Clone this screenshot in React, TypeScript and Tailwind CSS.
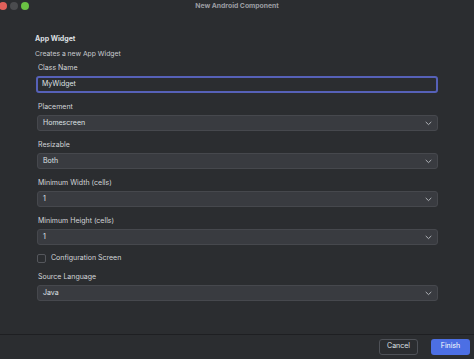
import React from "react";

const font = { fontFamily: "Inter, 'Liberation Sans', sans-serif" };

function Chevron() {
  return (
    <svg width="7" height="5" viewBox="0 0 7 5" className="shrink-0">
      <path d="M1 1.2 L3.5 3.6 L6 1.2" fill="none" stroke="#aeb1b6" strokeWidth="1" strokeLinecap="round" strokeLinejoin="round" />
    </svg>
  );
}

function Label({ children }: { children: React.ReactNode }) {
  return <div className="h-[10px] leading-[10px] text-[7px] text-[#d3d5d9] pl-[3px] mb-[3px]">{children}</div>;
}

function Select({ value }: { value: string }) {
  return (
    <div className="h-[16px] w-[401px] ml-[2px] rounded-[3px] border border-[#46484d] bg-[#393b40] flex items-center justify-between pl-[5px] pr-[5px] text-[7px] text-[#dfe1e5]">
      <span>{value}</span>
      <Chevron />
    </div>
  );
}

export default function App() {
  return (
    <div className="w-[474px] h-[359px] bg-[#2b2d30] flex flex-col overflow-hidden" style={font}>
      <div className="h-[13px] relative flex items-center justify-center">
        <div className="absolute left-[-1px] top-[2px] flex gap-[3px]">
          <span className="w-[8px] h-[8px] rounded-full bg-[#e0605a]" />
          <span className="w-[8px] h-[8px] rounded-full bg-[#4a4b4e]" />
          <span className="w-[8px] h-[8px] rounded-full bg-[#6ac143]" />
        </div>
        <span className="text-[6.8px] font-bold text-[#9c9ea3] leading-none">New Android Component</span>
      </div>
      <div className="flex-1 flex flex-col pl-[35px] pt-[21px]">
        <div className="h-[10px] leading-[10px] text-[7px] font-bold text-[#dfe1e5]">App Widget</div>
        <div className="h-[10px] leading-[10px] text-[6.8px] text-[#c9cbcf] mt-[5px]">Creates a new App Widget</div>
        <div className="mt-[4px]">
          <Label>Class Name</Label>
          <div className="h-[17px] w-[402px] ml-[1px] rounded-[3px] border-[2px] border-[#5661b8] bg-[#2b2d30] flex items-center pl-[4px] text-[7px] text-[#dfe1e5]">
            MyWidget
          </div>
        </div>
        <div className="mt-[9px]">
          <Label>Placement</Label>
          <Select value="Homescreen" />
        </div>
        <div className="mt-[9px]">
          <Label>Resizable</Label>
          <Select value="Both" />
        </div>
        <div className="mt-[9px]">
          <Label>Minimum Width (cells)</Label>
          <Select value="1" />
        </div>
        <div className="mt-[9px]">
          <Label>Minimum Height (cells)</Label>
          <Select value="1" />
        </div>
        <div className="mt-[8px] flex items-center h-[10px] ml-[2px]">
          <span className="w-[9px] h-[9px] rounded-[2px] border border-[#55575c] bg-[#2b2d30]" />
          <span className="ml-[5px] text-[7px] text-[#d3d5d9]">Configuration Screen</span>
        </div>
        <div className="mt-[9px]">
          <Label>Source Language</Label>
          <Select value="Java" />
        </div>
      </div>
      <div className="h-[25px] border-t border-[#1e1f22] flex items-center justify-end gap-[13px] pr-[4px] pb-[1px]">
        <div className="h-[16px] w-[39px] rounded-[3px] border border-[#4e5157] bg-[#2b2d30] flex items-center justify-center text-[7px] text-[#dfe1e5]">Cancel</div>
        <div className="h-[16px] w-[39px] rounded-[3px] bg-[#4c6fe4] flex items-center justify-center text-[7px] text-white">Finish</div>
      </div>
    </div>
  );
}
